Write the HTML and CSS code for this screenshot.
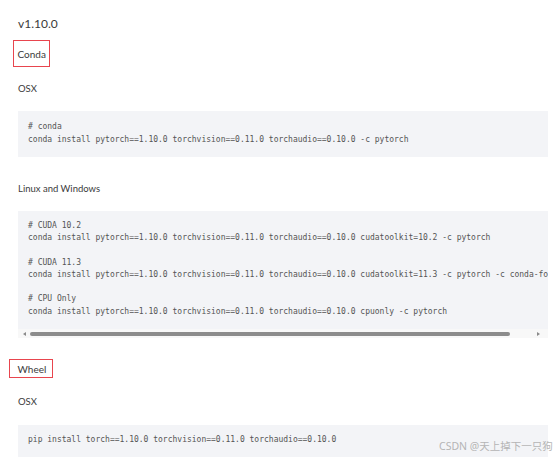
FILE: index.html
```html
<!DOCTYPE html>
<html>
<head>
<meta charset="utf-8">
<link rel="stylesheet" href="styles.css">
</head>
<body>
<div class="page">
  <h2 class="version">v1.10.0</h2>
  <div class="mark mark-conda">Conda</div>
  <p class="os">OSX</p>
  <pre class="code code-first"># conda
conda install pytorch==1.10.0 torchvision==0.11.0 torchaudio==0.10.0 -c pytorch</pre>
  <p class="os os-linux">Linux and Windows</p>
  <div class="code-wrap">
    <pre class="code code-scroll"># CUDA 10.2
conda install pytorch==1.10.0 torchvision==0.11.0 torchaudio==0.10.0 cudatoolkit=10.2 -c pytorch

# CUDA 11.3
conda install pytorch==1.10.0 torchvision==0.11.0 torchaudio==0.10.0 cudatoolkit=11.3 -c pytorch -c conda-forge

# CPU Only
conda install pytorch==1.10.0 torchvision==0.11.0 torchaudio==0.10.0 cpuonly -c pytorch</pre>
    <div class="scrollbar">
      <span class="arrow arrow-left"></span>
      <span class="thumb"></span>
      <span class="arrow arrow-right"></span>
    </div>
  </div>
  <div class="mark mark-wheel">Wheel</div>
  <p class="os os-wheel">OSX</p>
  <pre class="code code-last">pip install torch==1.10.0 torchvision==0.11.0 torchaudio==0.10.0</pre>
</div>
<div class="watermark">CSDN @天上掉下一只狗</div>
</body>
</html>
```

FILE: styles.css
```css
html, body {
  margin: 0;
  padding: 0;
  background: #ffffff;
  overflow: hidden;
}
body {
  width: 559px;
  height: 457px;
  position: relative;
  font-family: Lato, "Noto Sans", sans-serif;
  color: #3a3a3a;
}
.page {
  padding: 15px 11px 0 18px;
  display: flex;
  flex-direction: column;
  align-items: flex-start;
}
.version {
  margin: 0;
  font-size: 12px;
  font-weight: 400;
  line-height: 18px;
  color: #3a3a3a;
}
.mark {
  font-size: 10px;
  line-height: 14px;
  border: 1.5px solid #e8454e;
  color: #3a3a3a;
}
.mark-conda {
  margin: 7px 0 0 -5px;
  padding: 6px 3px 5px 3.5px;
}
.mark-wheel {
  margin: 21px 0 0 -9px;
  padding: 2px 6px 1px 7.5px;
}
.os {
  margin: 16px 0 0 0;
  font-size: 9.5px;
  line-height: 12px;
}
.os-linux {
  margin-top: 26px;
}
.os-wheel {
  margin-top: 18px;
}
.code {
  margin: 0;
  align-self: stretch;
  background: #f3f4f7;
  font-family: "DejaVu Sans Mono", "Liberation Mono", monospace;
  font-size: 8px;
  line-height: 12.2px;
  color: #555555;
  padding: 9px 10px;
  white-space: pre;
  overflow: hidden;
}
.code-first {
  margin-top: 16px;
  padding: 10px 10px 11px;
  line-height: 12.6px;
}
.code-wrap {
  align-self: stretch;
  margin-top: 16px;
  display: flex;
  flex-direction: column;
}
.code-scroll {
  padding: 9px 10px 11.4px;
}
.scrollbar {
  height: 9px;
  background: #f8f8f8;
  display: flex;
  align-items: center;
  padding: 0 8px 0 5px;
}
.arrow {
  width: 0;
  height: 0;
  border-top: 2px solid transparent;
  border-bottom: 2px solid transparent;
}
.arrow-left {
  border-right: 3px solid #8a8a8a;
}
.arrow-right {
  border-left: 3px solid #8a8a8a;
}
.thumb {
  margin-left: 4px;
  width: 480px;
  height: 4px;
  border-radius: 2px;
  background: #8c8c8c;
  margin-right: auto;
}
.code-last {
  margin-top: 17px;
  padding: 9px 10px 20px;
}
.watermark {
  position: absolute;
  left: 439px;
  top: 439px;
  font-family: "Noto Sans", "Noto Sans CJK SC", sans-serif;
  font-size: 10.5px;
  line-height: 14px;
  color: #b5b5b5;
  white-space: nowrap;
}
```
